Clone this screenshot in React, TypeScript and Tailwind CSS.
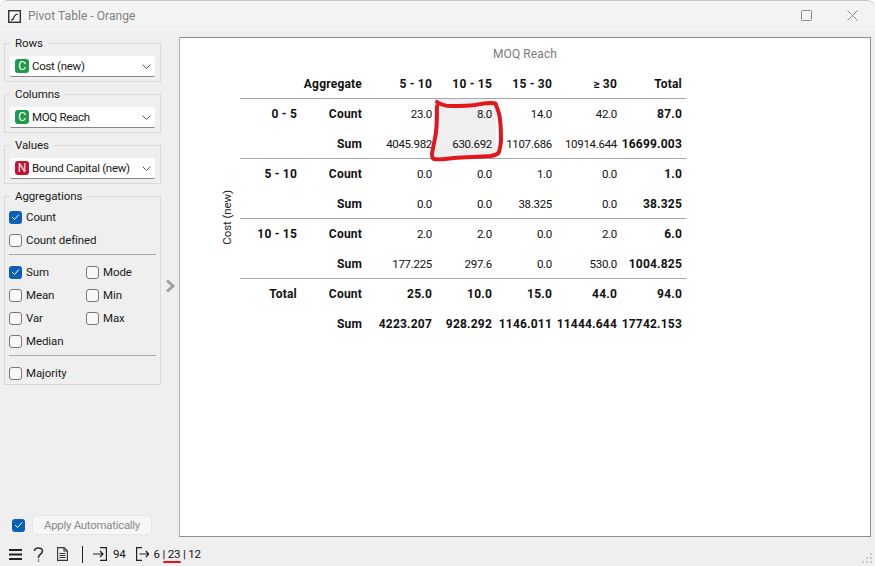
import React from "react";

function VarBadge({ l, c }: { l: string; c: string }) {
  return <span className={`w-[14px] h-[14px] rounded-[3px] text-white text-[12px] leading-[14px] text-center shrink-0 ${c}`}>{l}</span>;
}
function Combo({ l, c, text }: { l: string; c: string; text: string }) {
  return (
    <div className="h-[21px] bg-white border-b border-[#868686] rounded-[2px] flex items-center pl-[5px] pr-[4px] gap-[3px] text-[#1a1a1a]">
      <VarBadge l={l} c={c} />
      <span className="flex-1 whitespace-nowrap tracking-[-0.3px]">{text}</span>
      <svg width="9" height="5" viewBox="0 0 9 5" fill="none" stroke="#555" strokeWidth="1"><path d="M.5.5l4 4 4-4" /></svg>
    </div>
  );
}
function Group({ title, children, cls }: { title: string; children: React.ReactNode; cls?: string }) {
  return (
    <fieldset className={`border border-[#d9d9d9] px-[5px] pt-[6px] pb-[4px] m-0 min-w-0 ${cls ?? ""}`}>
      <legend className="px-[5px] leading-[14px] text-[#1a1a1a]">{title}</legend>
      {children}
    </fieldset>
  );
}
function Check({ label, on, cls }: { label?: string; on?: boolean; cls?: string }) {
  return (
    <div className={`flex items-center gap-[4px] h-[14px] whitespace-nowrap text-[#1a1a1a] ${cls ?? ""}`}>
      <span className={`w-[13px] h-[13px] rounded-[3px] flex items-center justify-center shrink-0 ${on ? "bg-[#0a5fb8]" : "bg-[#f8f8f8] border border-[#777]"}`}>
        {on && <svg width="9" height="8" viewBox="0 0 9 8" fill="none" stroke="#fff" strokeWidth="1"><path d="M1 4l2.500 2.500L8 1.500" /></svg>}
      </span>
      {label}
    </div>
  );
}
const Sep = ({ cls }: { cls: string }) => <div className={`h-px bg-[#a9a9a9] ${cls}`} />;

const head = ["Aggregate", "5 - 10", "10 - 15", "15 - 30", "≥ 30", "Total"];
type Row = { g: string; a: string; v: string[]; border?: boolean; bold?: boolean };
const rows: Row[] = [
  { g: "0 - 5", a: "Count", v: ["23.0", "8.0", "14.0", "42.0", "87.0"], border: true },
  { g: "", a: "Sum", v: ["4045.982", "630.692", "1107.686", "10914.644", "16699.003"] },
  { g: "5 - 10", a: "Count", v: ["0.0", "0.0", "1.0", "0.0", "1.0"], border: true },
  { g: "", a: "Sum", v: ["0.0", "0.0", "38.325", "0.0", "38.325"] },
  { g: "10 - 15", a: "Count", v: ["2.0", "2.0", "0.0", "2.0", "6.0"], border: true },
  { g: "", a: "Sum", v: ["177.225", "297.6", "0.0", "530.0", "1004.825"] },
  { g: "Total", a: "Count", v: ["25.0", "10.0", "15.0", "44.0", "94.0"], border: true, bold: true },
  { g: "", a: "Sum", v: ["4223.207", "928.292", "1146.011", "11444.644", "17742.153"], bold: true },
];

function PivotTable() {
  const bold = "font-bold text-[12px] tracking-[0.2px]";
  return (
    <div className="grid grid-cols-[61px_65px_70px_60px_60px_65px_65px] auto-rows-[30px] text-[#111]">
      <div />
      {head.map((h) => (
        <div key={h} className={`flex items-center justify-end pr-[4px] pt-[2px] ${bold}`}>{h}</div>
      ))}
      {rows.map((r, i) => {
        const edge = r.border ? "border-t border-[#a6a6a6]" : "pt-[2px]";
        return (
          <React.Fragment key={i}>
            <div className={`flex items-center justify-end pr-[4px] ${bold} ${edge}`}>{r.g}</div>
            <div className={`flex items-center justify-end pr-[4px] ${bold} ${edge}`}>{r.a}</div>
            {r.v.map((x, j) => (
              <div
                key={j}
                className={`flex items-center justify-end pr-[4px] whitespace-nowrap ${edge} ${r.bold || j === 4 ? bold : "tracking-[-0.3px]"} ${i < 2 && j === 1 ? "bg-[#efefef]" : ""}`}
              >
                {x}
              </div>
            ))}
          </React.Fragment>
        );
      })}
    </div>
  );
}

export default function App() {
  return (
    <div className="w-[875px] h-[566px] overflow-hidden bg-white text-[11.5px] leading-[16px] tracking-[-0.1px]" style={{ fontFamily: 'Roboto, sans-serif' }}>
      <div className="w-full h-full rounded-t-[8px] border-t border-[#c4c4c4] bg-[#efefef] flex flex-col relative">
        {/* title bar */}
        <div className="h-[30px] bg-[#f3f3f3] rounded-t-[8px] flex items-center shrink-0 pl-[8px]">
          <svg width="13" height="13" viewBox="0 0 13 13" fill="none" className="mr-[7px]">
            <rect x="0.7" y="0.7" width="11.600" height="11.600" fill="#f4f4f4" stroke="#333" strokeWidth="1.400" />
            <path d="M3 10c3 0 2-1 3-3s1-3 4-3" stroke="#222" strokeWidth="1.200" />
          </svg>
          <span className="text-[#808080] text-[12px] tracking-[0.05px]">Pivot Table - Orange</span>
          <div className="ml-auto flex items-center mt-[-1px]">
            <svg width="11" height="11" viewBox="0 0 11 11" fill="none" stroke="#8a8a8a" className="mr-[35px]"><rect x="0.5" y="0.5" width="10" height="10" rx="1" /></svg>
            <svg width="11" height="11" viewBox="0 0 11 11" fill="none" stroke="#8a8a8a" className="mr-[17px]"><path d="M0.5 0.5l10 10M10.500 0.5l-10 10" /></svg>
          </div>
        </div>
        {/* body */}
        <div className="flex-1 flex min-h-0 pt-[5px]">
          <div className="w-[161px] shrink-0 pl-[4px] flex flex-col">
            <Group title="Rows"><Combo l="C" c="bg-[#1f9a4b]" text="Cost (new)" /></Group>
            <Group title="Columns" cls="mt-[5px]"><Combo l="C" c="bg-[#1f9a4b]" text="MOQ Reach" /></Group>
            <Group title="Values" cls="mt-[5px]"><Combo l="N" c="bg-[#c8102e]" text="Bound Capital (new)" /></Group>
            <Group title="Aggregations" cls="mt-[5px] !pt-0 !pb-0">
              <div className="flex flex-col -mx-[1px] pt-[7px] pb-[4px]">
                <Check label="Count" on />
                <Check label="Count defined" cls="mt-[9px]" />
                <Sep cls="mt-[7px]" />
                <div className="grid grid-cols-[77px_1fr] auto-rows-[14px] gap-y-[9px] mt-[10px]">
                  <Check label="Sum" on />
                  <Check label="Mode" />
                  <Check label="Mean" />
                  <Check label="Min" />
                  <Check label="Var" />
                  <Check label="Max" />
                  <Check label="Median" />
                </div>
                <Sep cls="mt-[7px]" />
                <Check label="Majority" cls="mt-[10px]" />
              </div>
            </Group>
            <div className="mt-auto flex items-center pl-[8px] pb-[2px] gap-[7px]">
              <Check on />
              <div className="w-[120px] h-[20px] bg-[#f6f6f6] border border-[#e6e6e6] rounded-[4px] text-[#8a8a8a] tracking-[-0.3px] flex items-center justify-center whitespace-nowrap">Apply Automatically</div>
            </div>
          </div>
          <div className="w-[18px] shrink-0 flex items-center justify-center">
            <svg width="10" height="14" viewBox="0 0 10 14" fill="none" stroke="#a0a0a0" strokeWidth="3" className="mt-[-1px]"><path d="M2 1.500L8 7l-6 5.500" /></svg>
          </div>
          <div className="w-[692px] h-[500px] mt-[1px] bg-white border border-[#8b8f98] border-l-[#b0b0b0] relative flex flex-col shrink-0">
            <div className="text-center text-[#7a7a7a] text-[12px] tracking-[0.1px] mt-[8px] leading-[16px]">MOQ Reach</div>
            <div className="flex mt-[6px]">
              <div className="w-[60px] shrink-0 relative">
                <span className="absolute left-[39px] top-[122px] [writing-mode:vertical-rl] rotate-180 whitespace-nowrap text-[#222]">Cost (new)</span>
              </div>
              <PivotTable />
            </div>
            {/* red annotation */}
            <svg className="absolute left-[250px] top-[62px]" width="75" height="66" viewBox="0 0 75 66" fill="none" stroke="#e3161b" strokeWidth="4" strokeLinecap="round" strokeLinejoin="round">
              <path d="M7 2c4 3 10 4 15 4 8 0 15 0 23-1 5-1 10-2 15-2 3 0 6 0 6 2 2 5 4 10 4 15 1 7 1 13 1 20 0 4-1 8-2 12-1 2-3 3-8 4-12 1-25 1-37 2-7 1-15 2-20 1-2 0-2-3-2-5 1-7 3-14 4-22 1-9 1-17 1-26" />
            </svg>
          </div>
        </div>
        {/* status bar */}
        <div className="h-[29px] pt-[5px] flex items-center shrink-0 text-[#111] relative text-[11.5px] tracking-[-0.2px]">
          <svg width="13" height="11" viewBox="0 0 13 11" className="ml-[9px]" fill="#222"><rect width="13" height="2" y="0" /><rect width="13" height="2" y="4.500" /><rect width="13" height="2" y="9" /></svg>
          <svg width="11" height="15" viewBox="0 0 11 15" fill="none" stroke="#333" strokeWidth="1.600" className="ml-[11px]"><path d="M1.500 4c0-2 2-3 4-3s4 1 4 3-2 3-3 4-1 1.500-1 3" /><path d="M5.500 12.500v2" strokeDasharray="1 0.500" /></svg>
          <svg width="11" height="14" viewBox="0 0 11 14" fill="none" stroke="#333" strokeWidth="1.100" className="ml-[13px]"><path d="M.6.6h6.500l3.300 3.300v9.500H.6zM7 .6v3.400h3.400M2.500 6.500h6M2.500 8.500h6M2.500 10.500h6" /></svg>
          <div className="w-px h-[17px] bg-[#222] ml-[14px]" />
          <svg width="14" height="14" viewBox="0 0 14 14" fill="none" stroke="#222" strokeWidth="1.200" className="ml-[10px]"><path d="M7 .6h6.400v12.800H7M0 7h9.500M7 4l3 3-3 3" /></svg>
          <span className="ml-[6px]">94</span>
          <svg width="13" height="14" viewBox="0 0 13 14" fill="none" stroke="#222" strokeWidth="1.200" className="ml-[10px]"><path d="M6 .6H.6v12.800H6M3.500 7h9M9.800 4l3 3-3 3" /></svg>
          <span className="ml-[5px] whitespace-nowrap">6 | 23 | 12</span>
          <div className="absolute left-[163px] top-[24px] w-[18px] h-[2px] bg-[#e3161b] rounded-full" />
          <svg width="12" height="12" viewBox="0 0 12 12" fill="#c9c9c9" className="absolute right-[1px] bottom-[1px]">
            <rect x="8" y="0" width="2" height="2" /><rect x="4" y="4" width="2" height="2" /><rect x="8" y="4" width="2" height="2" /><rect x="0" y="8" width="2" height="2" /><rect x="4" y="8" width="2" height="2" /><rect x="8" y="8" width="2" height="2" />
          </svg>
        </div>
      </div>
    </div>
  );
}
